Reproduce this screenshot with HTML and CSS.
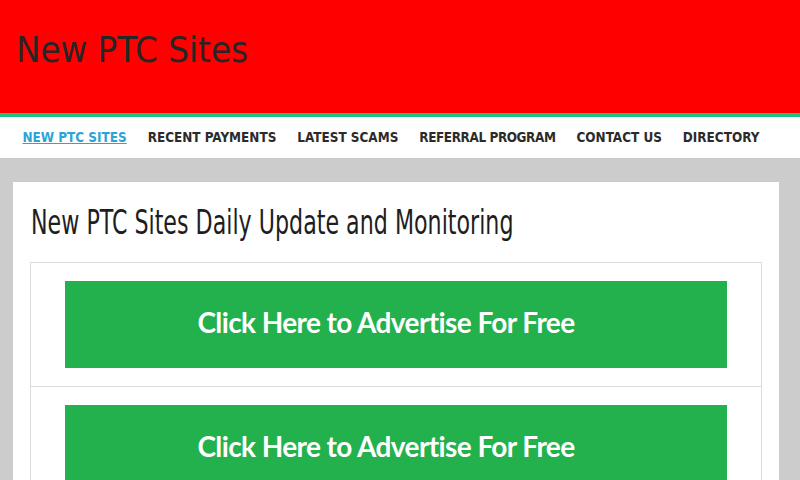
FILE: index.html
```html
<!DOCTYPE html>
<html lang="en">
<head>
    <meta charset="UTF-8">
    <meta name="viewport" content="width=device-width, initial-scale=1.0">
    <title>New PTC Sites</title>
    <link rel="stylesheet" href="styles.css">
</head>
<body>
    <div class="header">
        <div class="site-title">New PTC Sites</div>
    </div>
    <div class="nav">
        <a href="#" class="active">New PTC Sites</a>
        <a href="#">Recent Payments</a>
        <a href="#">Latest Scams</a>
        <a href="#" class="tight">Referral Program</a>
        <a href="#">Contact Us</a>
        <a href="#">Directory</a>
    </div>
    <div class="wrap">
        <div class="card">
            <h1><span>New PTC Sites Daily Update and Monitoring</span></h1>
            <div class="list">
                <div class="row"><a href="#" class="ad-btn">Click Here to Advertise For Free</a></div>
                <div class="row"><a href="#" class="ad-btn">Click Here to Advertise For Free</a></div>
            </div>
        </div>
    </div>
</body>
</html>
```

FILE: styles.css
```css
body{
    margin: 0;
    background-color: #cccccc;
    font-family: "DejaVu Sans", sans-serif;
    overflow: hidden;
}
.header{
    background-color: #ff0000;
    height: 113px;
    border-bottom: 4px solid #1fc27a;
}
.site-title{
    font-family: "DejaVu Sans Condensed", "DejaVu Sans", sans-serif;
    font-size: 36.3px;
    color: #262626;
    padding: 28px 0 0 16px;
    line-height: 44px;
}
.nav{
    background: white;
    height: 41px;
    display: flex;
    align-items: center;
    padding-left: 12px;
}
.nav a{
    font-family: "DejaVu Sans Condensed", sans-serif;
    font-weight: bold;
    font-size: 13.4px;
    text-transform: uppercase;
    color: #2b2b2b;
    text-decoration: none;
    padding: 0 10.5px;
}
.nav a.tight{
    letter-spacing: -0.4px;
}
.nav a.active{
    color: #2ea3d8;
    text-decoration: underline;
}
.wrap{
    padding: 24px 21px 0 13px;
}
.card{
    background: white;
    padding: 18px 17px 0 17px;
}
h1{
    font-family: "DejaVu Sans Condensed", sans-serif;
    font-weight: normal;
    font-size: 34px;
    color: #1e1e1e;
    margin: 0 0 0 1px;
    line-height: 44px;
    height: 62px;
    white-space: nowrap;
}
h1 span{
    display: inline-block;
    transform: scaleX(0.725);
    transform-origin: left center;
}
.list{
    border: 1px solid #dddddd;
}
.row{
    padding: 18px 34px;
    border-bottom: 1px solid #dddddd;
}
.ad-btn{
    display: flex;
    align-items: center;
    justify-content: center;
    height: 87px;
    box-sizing: border-box;
    padding: 0 20px 5px 0;
    background: #22b14c;
    color: white;
    text-decoration: none;
    font-family: "Lato", sans-serif;
    font-weight: bold;
    font-size: 28px;
    letter-spacing: -0.6px;
}
```
